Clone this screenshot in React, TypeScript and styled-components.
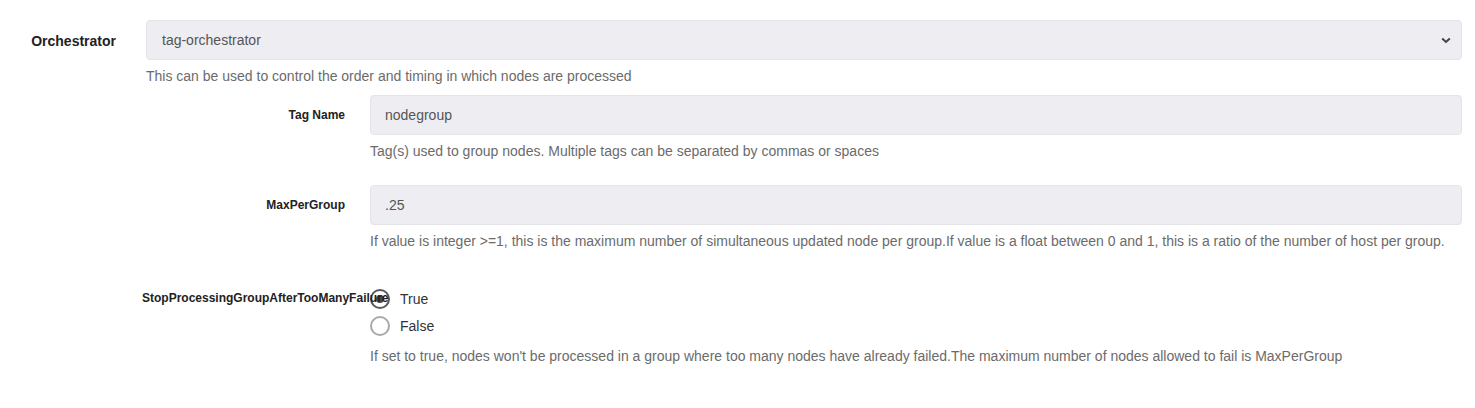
import { createGlobalStyle } from "styled-components";
import styled from "styled-components";

const GlobalStyle = createGlobalStyle`
  body {
    margin: 0;
    background: #fff;
    font-family: "Liberation Sans", Arial, sans-serif;
    color: #333;
  }
`;

const Page = styled.div`
  padding: 20px 13px 0 0;
`;

const Row = styled.div`
  display: grid;
  grid-template-columns: 146px 1fr;
`;

const MainLabel = styled.label`
  text-align: right;
  padding-right: 30px;
  font-size: 14px;
  font-weight: bold;
  line-height: 42px;
  color: #222;
`;

const Select = styled.div`
  height: 40px;
  box-sizing: border-box;
  background: #eeedf2;
  border: 1px solid #e4e3e8;
  border-radius: 4px;
  display: flex;
  align-items: center;
  justify-content: space-between;
  padding: 0 10px 0 15px;
  font-size: 14px;
  color: #555;
`;

const Input = styled.div`
  height: 40px;
  box-sizing: border-box;
  background: #eeedf2;
  border: 1px solid #e4e3e8;
  border-radius: 4px;
  display: flex;
  align-items: center;
  padding: 0 14px;
  font-size: 14px;
  color: #555;
`;

const Help = styled.div<{ top?: number }>`
  margin-top: ${(p) => p.top ?? 7}px;
  font-size: 14px;
  line-height: 18px;
  color: #6b6b6b;
`;

const Nested = styled.div`
  margin-left: -4px;
`;

const Field = styled.div<{ top: number }>`
  display: grid;
  grid-template-columns: 228px 1fr;
  margin-top: ${(p) => p.top}px;
`;

const SubLabel = styled.label<{ radio?: boolean }>`
  position: relative;
  z-index: 1;
  padding-right: 25px;
  font-size: 12px;
  font-weight: bold;
  color: #222;
  white-space: nowrap;
  line-height: ${(p) => (p.radio ? "18px" : "40px")};
  text-align: ${(p) => (p.radio ? "left" : "right")};
`;

const Options = styled.div`
  display: flex;
  flex-direction: column;
  gap: 7px;
`;

const Option = styled.div`
  display: flex;
  align-items: center;
  gap: 10px;
  font-size: 14px;
  color: #333;
  height: 20px;
`;

const Radio = styled.span<{ checked?: boolean }>`
  width: 20px;
  height: 20px;
  box-sizing: border-box;
  border-radius: 50%;
  border: 2px solid ${(p) => (p.checked ? "#585858" : "#a9a9a9")};
  background: transparent;
  display: flex;
  align-items: center;
  justify-content: center;
  flex-shrink: 0;
  &::after {
    content: "";
    width: 8px;
    height: 8px;
    border-radius: 50%;
    background: ${(p) => (p.checked ? "#4a4a4a" : "transparent")};
  }
`;

const Chevron = () => (
  <svg width="10" height="7" viewBox="0 0 10 7">
    <path d="M1.2 1.5 L5 5 L8.8 1.5" fill="none" stroke="#444" strokeWidth="2" />
  </svg>
);

export default function App() {
  return (
    <Page>
      <GlobalStyle />
      <Row>
        <MainLabel>Orchestrator</MainLabel>
        <div>
          <Select>
            <span>tag-orchestrator</span>
            <Chevron />
          </Select>
          <Help>This can be used to control the order and timing in which nodes are processed</Help>
          <Nested>
            <Field top={10}>
              <SubLabel>Tag Name</SubLabel>
              <div>
                <Input>nodegroup</Input>
                <Help>
                  Tag(s) used to group nodes. Multiple tags can be separated by commas or spaces
                </Help>
              </div>
            </Field>
            <Field top={25}>
              <SubLabel>MaxPerGroup</SubLabel>
              <div>
                <Input>.25</Input>
                <Help>
                  If value is integer &gt;=1, this is the maximum number of simultaneous updated node per group.If value is a float between 0 and 1, this is a ratio of the number of host per group.
                </Help>
              </div>
            </Field>
            <Field top={39}>
              <SubLabel radio>StopProcessingGroupAfterTooManyFailure</SubLabel>
              <div>
                <Options>
                  <Option>
                    <Radio checked />
                    True
                  </Option>
                  <Option>
                    <Radio />
                    False
                  </Option>
                </Options>
                <Help top={11}>
                  If set to true, nodes won't be processed in a group where too many nodes have already failed.The maximum number of nodes allowed to fail is MaxPerGroup
                </Help>
              </div>
            </Field>
          </Nested>
        </div>
      </Row>
    </Page>
  );
}
